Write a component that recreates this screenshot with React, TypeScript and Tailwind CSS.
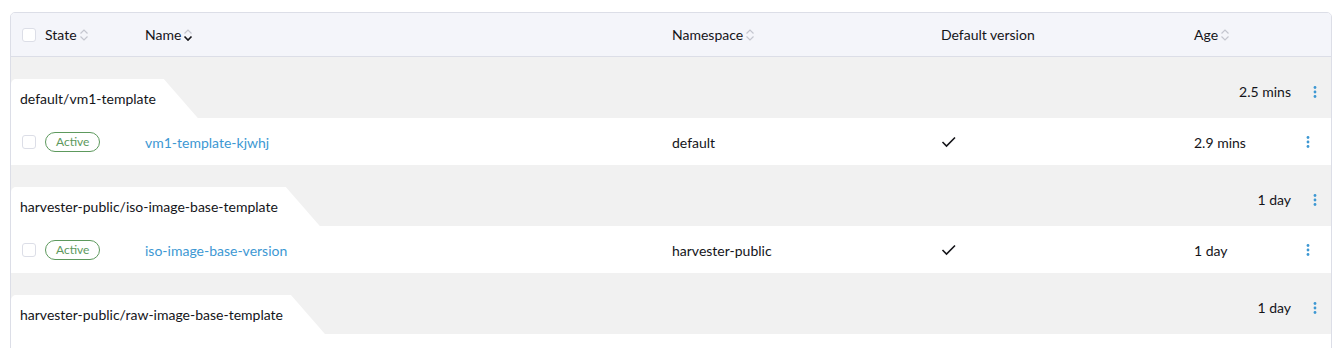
import React from "react";

const Sort = ({ active = false }: { active?: boolean }) => (
  <svg width="10" height="16" viewBox="0 0 10 16" className="ml-[2px]" fill="none">
    <path d="M1.5 6.5 L5 3 L8.5 6.5" stroke="#c4c6cf" strokeWidth="1.2" />
    <path
      d="M1.5 9.5 L5 13 L8.5 9.5"
      stroke={active ? "#141419" : "#c4c6cf"}
      strokeWidth={active ? "1.6" : "1.2"}
    />
  </svg>
);

const Checkbox = () => (
  <div className="w-[14px] h-[14px] rounded-[3px] border border-[#dcdee7] bg-white" />
);

const Dots = () => (
  <svg width="4" height="14" viewBox="0 0 4 14">
    <circle cx="2" cy="2.5" r="1.4" fill="#3d98d3" />
    <circle cx="2" cy="7" r="1.4" fill="#3d98d3" />
    <circle cx="2" cy="11.5" r="1.4" fill="#3d98d3" />
  </svg>
);

const Check = () => (
  <svg width="16" height="12" viewBox="0 0 16 12" fill="none">
    <path d="M1.5 6 L5.5 10 L14 1.5" stroke="#141419" strokeWidth="1.6" />
  </svg>
);

const GroupRow = ({ name, age }: { name: string; age: string }) => (
  <div className="flex justify-between h-[61px] bg-[#f1f1f1]">
    <div className="self-end flex items-center h-[39px] bg-white rounded-tl-[5px] pl-[9px] pr-[42px] [clip-path:polygon(0_0,calc(100%_-_34px)_0,100%_100%,0_100%)]">
      <span className="leading-[17px]">{name}</span>
    </div>
    <div className="flex items-center pt-[26px] pr-[14px] self-start">
      <span className="leading-[17px]">{age}</span>
      <div className="ml-[22px] flex items-center">
        <Dots />
      </div>
    </div>
  </div>
);

const DataRow = ({
  name,
  ns,
  age,
}: {
  name: string;
  ns: string;
  age: string;
}) => (
  <div className="flex items-center h-[47px] bg-white pt-[1px]">
    <div className="w-[34px] pl-[11px] flex items-center">
      <Checkbox />
    </div>
    <div className="w-[100px] flex items-center">
      <span className="inline-flex items-center h-[20px] px-[10px] rounded-full border border-[#5d995d] text-[#5d995d] text-[12px] leading-none">
        Active
      </span>
    </div>
    <div className="w-[527px] text-[#3d98d3]">{name}</div>
    <div className="w-[269px]">{ns}</div>
    <div className="w-[253px] flex items-center">
      <Check />
    </div>
    <div className="w-[96px]">{age}</div>
    <div className="flex-1 flex items-center pl-[16px]">
      <Dots />
    </div>
  </div>
);

export default function App() {
  return (
    <div
      className="w-[1335px] h-[348px] bg-white overflow-hidden text-[14px] text-[#141419]"
      style={{ fontFamily: "Lato, 'Noto Sans', sans-serif" }}
    >
      <div className="ml-[10px] mt-[12px] w-[1322px] border border-[#dcdee7] rounded-t-[5px] overflow-hidden">
        <div className="flex items-center h-[44px] bg-[#f4f5fa] border-b border-[#dcdee7]">
          <div className="w-[34px] pl-[11px] flex items-center">
            <Checkbox />
          </div>
          <div className="w-[100px] flex items-center">
            State
            <Sort />
          </div>
          <div className="w-[527px] flex items-center">
            Name
            <Sort active />
          </div>
          <div className="w-[269px] flex items-center">
            Namespace
            <Sort />
          </div>
          <div className="w-[253px] flex items-center">Default version</div>
          <div className="w-[96px] flex items-center">
            Age
            <Sort />
          </div>
          <div className="flex-1" />
        </div>
        <GroupRow name="default/vm1-template" age="2.5 mins" />
        <DataRow name="vm1-template-kjwhj" ns="default" age="2.9 mins" />
        <GroupRow name="harvester-public/iso-image-base-template" age="1 day" />
        <DataRow name="iso-image-base-version" ns="harvester-public" age="1 day" />
        <GroupRow name="harvester-public/raw-image-base-template" age="1 day" />
        <div className="h-[47px] bg-white" />
      </div>
    </div>
  );
}
